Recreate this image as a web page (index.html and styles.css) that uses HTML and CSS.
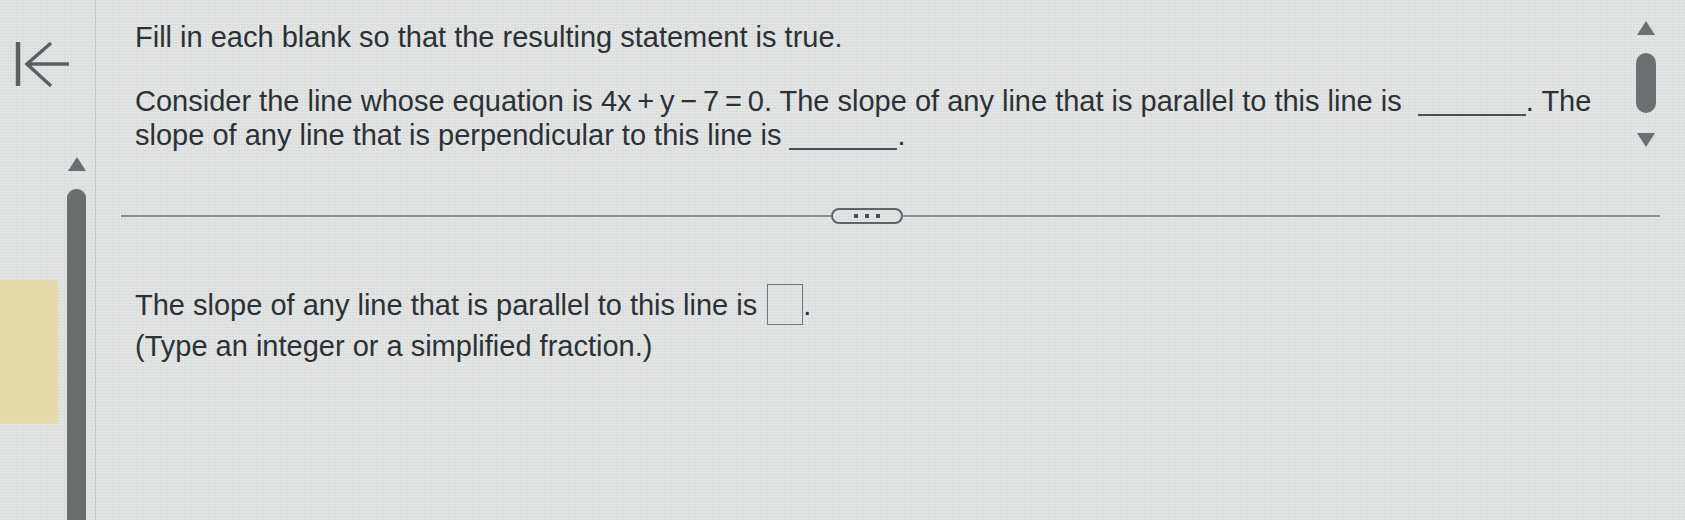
FILE: index.html
```html
<!DOCTYPE html>
<html lang="en">
<head>
<meta charset="utf-8">
<title>Slope question</title>
<link rel="stylesheet" href="styles.css">
</head>
<body>
<div class="page">
  <aside class="rail">
    <button class="back" aria-label="Back">
      <svg width="60" height="50" viewBox="0 0 60 50">
        <path d="M6 2 V46" stroke="#5c6062" stroke-width="4.5" fill="none"/>
        <path d="M15 24 H57" stroke="#5c6062" stroke-width="3.5" fill="none"/>
        <path d="M39 3 L15 24 L39 46" stroke="#5c6062" stroke-width="3.5" fill="none" stroke-linejoin="miter"/>
      </svg>
    </button>
    <div class="rail-body">
      <div class="marker"></div>
      <div class="vscroll">
        <span class="tri-up"></span>
        <span class="vthumb"></span>
      </div>
    </div>
  </aside>
  <main class="main">
    <section class="question">
      <div class="question-text">
        <p class="lead">Fill in each blank so that the resulting statement is true.</p>
        <p class="statement">Consider the line whose equation is 4x&#8201;+&#8201;y&#8201;&minus;&#8201;7&#8201;=&#8201;0. The slope of any line that is parallel to this line is <span class="blank blank-first"></span>. The slope of any line that is perpendicular to this line is <span class="blank"></span>.</p>
      </div>
      <div class="rscroll">
        <span class="tri-up"></span>
        <span class="rthumb"></span>
        <span class="tri-down"></span>
      </div>
    </section>
    <div class="divider">
      <span class="rule rule-left"></span>
      <button class="more" aria-label="More"><i></i><i></i><i></i></button>
      <span class="rule"></span>
    </div>
    <section class="answer">
      <p class="ask">The slope of any line that is parallel to this line is <span class="box"></span>.</p>
      <p class="hint">(Type an integer or a simplified fraction.)</p>
    </section>
  </main>
</div>
</body>
</html>
```

FILE: styles.css
```css
* { box-sizing: border-box; }
html, body {
  margin: 0;
  padding: 0;
  height: 520px;
  overflow: hidden;
}
body {
  background-color: #dfe2e0;
  background-image:
    repeating-linear-gradient(90deg, rgba(255,255,255,0.18) 0 1px, rgba(0,0,0,0) 1px 3px),
    repeating-linear-gradient(0deg, rgba(160,165,165,0.10) 0 1px, rgba(0,0,0,0) 1px 3px);
  font-family: "Liberation Sans", Arial, sans-serif;
  color: #2c3135;
}
.page {
  display: flex;
  height: 520px;
  overflow: hidden;
}
.rail {
  width: 96px;
  flex: none;
  border-right: 1px solid #c4c7c6;
  display: flex;
  flex-direction: column;
  padding-top: 40px;
  overflow: hidden;
}
.back {
  border: 0;
  background: none;
  padding: 0;
  margin-left: 12px;
  width: 60px;
  height: 50px;
  display: block;
  flex: none;
}
.back svg { display: block; }
.rail-body {
  display: flex;
  align-items: flex-start;
  margin-top: 67px;
}
.marker {
  width: 58px;
  height: 143px;
  margin-top: 123px;
  background: #e6dcaa;
}
.vscroll {
  margin-left: 9px;
  width: 19px;
  display: flex;
  flex-direction: column;
  align-items: center;
}
.tri-up {
  width: 0;
  height: 0;
  border-left: 9px solid transparent;
  border-right: 9px solid transparent;
  border-bottom: 14px solid #6b6f70;
}
.tri-down {
  width: 0;
  height: 0;
  border-left: 9px solid transparent;
  border-right: 9px solid transparent;
  border-top: 14px solid #6b6f70;
}
.vthumb {
  margin-top: 18px;
  width: 19px;
  height: 342px;
  border-radius: 9px 9px 0 0;
  background: #6a6e6d;
}
.main {
  flex: 1;
  display: flex;
  flex-direction: column;
  padding-left: 25px;
}
.question {
  display: flex;
  align-items: flex-start;
  height: 208px;
}
.question-text {
  flex: 1;
  padding-left: 14px;
  padding-top: 20px;
  padding-right: 20px;
  font-size: 29px;
  line-height: 34px;
}
.question-text p { margin: 0; }
.statement { margin-top: 30px !important; }
.blank {
  display: inline-block;
  width: 108px;
  height: 18px;
  border-bottom: 2px solid #4b5055;
  vertical-align: -5px;
}
.blank-first {
  margin-left: 8px;
}
.rscroll {
  width: 20px;
  margin-right: 29px;
  margin-top: 21px;
  display: flex;
  flex-direction: column;
  align-items: center;
}
.rthumb {
  width: 20px;
  height: 60px;
  margin: 18px 0 20px;
  border-radius: 10px;
  background: #6c7072;
}
.divider {
  display: flex;
  align-items: center;
  margin-right: 25px;
  height: 16px;
}
.rule {
  flex: 1;
  height: 2px;
  background: #8b8f8f;
}
.rule-left {
  flex: none;
  width: 710px;
}
.more {
  width: 72px;
  height: 16px;
  border: 2px solid #5f6466;
  border-radius: 9px;
  background: transparent;
  padding: 0;
  display: flex;
  align-items: center;
  justify-content: center;
  gap: 7px;
}
.more i {
  display: block;
  width: 4px;
  height: 4px;
  background: #4a4f52;
}
.answer {
  padding-left: 14px;
  padding-top: 60px;
  font-size: 29px;
  line-height: 41px;
}
.answer p { margin: 0; }
.box {
  display: inline-block;
  width: 36px;
  height: 41px;
  border: 1.5px solid #6d7486;
  vertical-align: -10px;
  margin-left: 2px;
}
```
